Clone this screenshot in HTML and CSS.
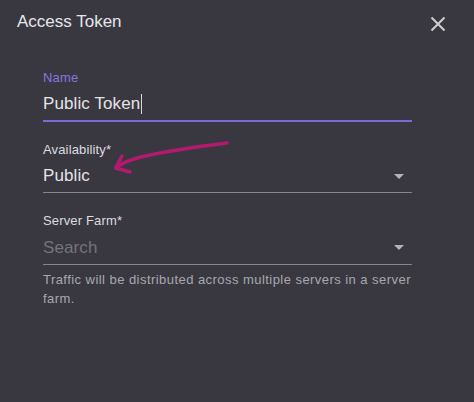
FILE: index.html
```html
<!DOCTYPE html>
<html lang="en">
<head>
<meta charset="utf-8">
<title>Access Token</title>
<link rel="stylesheet" href="styles.css">
</head>
<body>
<div class="dialog">
  <header class="header">
    <h1 class="title">Access Token</h1>
    <button class="close" aria-label="Close">
      <svg width="20" height="20" viewBox="0 0 20 20"><path d="M3.5 3.5 L16.5 16.5 M16.5 3.5 L3.5 16.5" stroke="#cfcfd3" stroke-width="2" fill="none"/></svg>
    </button>
  </header>
  <form class="form">
    <div class="field field-name">
      <label class="label label-focus">Name</label>
      <div class="control control-focus">
        <span class="value">Public Token</span><span class="caret"></span>
      </div>
    </div>
    <div class="field">
      <label class="label">Availability*</label>
      <div class="control">
        <span class="value">Public</span>
        <span class="tri"></span>
      </div>
    </div>
    <div class="field">
      <label class="label">Server Farm*</label>
      <div class="control">
        <span class="value placeholder">Search</span>
        <span class="tri"></span>
      </div>
      <p class="helper">Traffic will be distributed across multiple servers in a server farm.</p>
    </div>
  </form>
  <svg class="annotation" width="474" height="402" viewBox="0 0 474 402">
    <path d="M227 143 C 195 147, 160 152, 137 158 C 127 161, 120 164, 116 168" stroke="#b3196f" stroke-width="3.5" fill="none" stroke-linecap="round"/>
    <path d="M122 156 L115.5 168 L130 172" stroke="#b3196f" stroke-width="3.5" fill="none" stroke-linecap="round" stroke-linejoin="round"/>
  </svg>
</div>
</body>
</html>
```

FILE: styles.css
```css
html, body {
  margin: 0;
  padding: 0;
  background: #393841;
}
body {
  font-family: "Liberation Sans", Arial, sans-serif;
  width: 474px;
  height: 402px;
  overflow: hidden;
}
.dialog {
  position: relative;
  width: 474px;
  height: 402px;
  background: #393841;
}
.header {
  display: flex;
  justify-content: space-between;
  align-items: flex-start;
  padding: 10px 26px 0 17px;
}
.title {
  margin: 0;
  font-size: 17px;
  line-height: 24px;
  font-weight: normal;
  color: #e6e6e9;
}
.close {
  margin-top: 4px;
  padding: 0;
  border: 0;
  background: none;
  width: 20px;
  height: 20px;
  display: block;
}
.close svg { display: block; }
.form {
  display: flex;
  flex-direction: column;
  gap: 20px;
  padding: 36px 62px 0 43px;
}
.field {
  display: flex;
  flex-direction: column;
}
.label {
  font-size: 13px;
  line-height: 16px;
  letter-spacing: 0.15px;
  color: #dcdce0;
}
.label-focus {
  color: #8677df;
}
.control {
  display: flex;
  align-items: center;
  margin-top: 6.5px;
  padding-bottom: 4px;
  border-bottom: 1px solid #85858c;
}
.field-name .control {
  margin-top: 5.5px;
}
.control-focus {
  border-bottom: 2px solid #7b69d8;
}
.value {
  font-size: 17px;
  line-height: 24px;
  letter-spacing: 0.1px;
  color: #e4e4e8;
}
.placeholder {
  color: #74747b;
}
.caret {
  display: inline-block;
  width: 1px;
  height: 20px;
  margin-left: 1px;
  background: #d8d8dc;
}
.tri {
  margin-left: auto;
  margin-right: 8px;
  width: 0;
  height: 0;
  border-left: 5px solid transparent;
  border-right: 5px solid transparent;
  border-top: 5px solid #b2b2b8;
}
.helper {
  margin: 5px 0 0;
  font-size: 13px;
  line-height: 19px;
  letter-spacing: 0.45px;
  color: #a8a8ae;
}
.annotation {
  position: absolute;
  left: 0;
  top: 0;
  pointer-events: none;
}
```
